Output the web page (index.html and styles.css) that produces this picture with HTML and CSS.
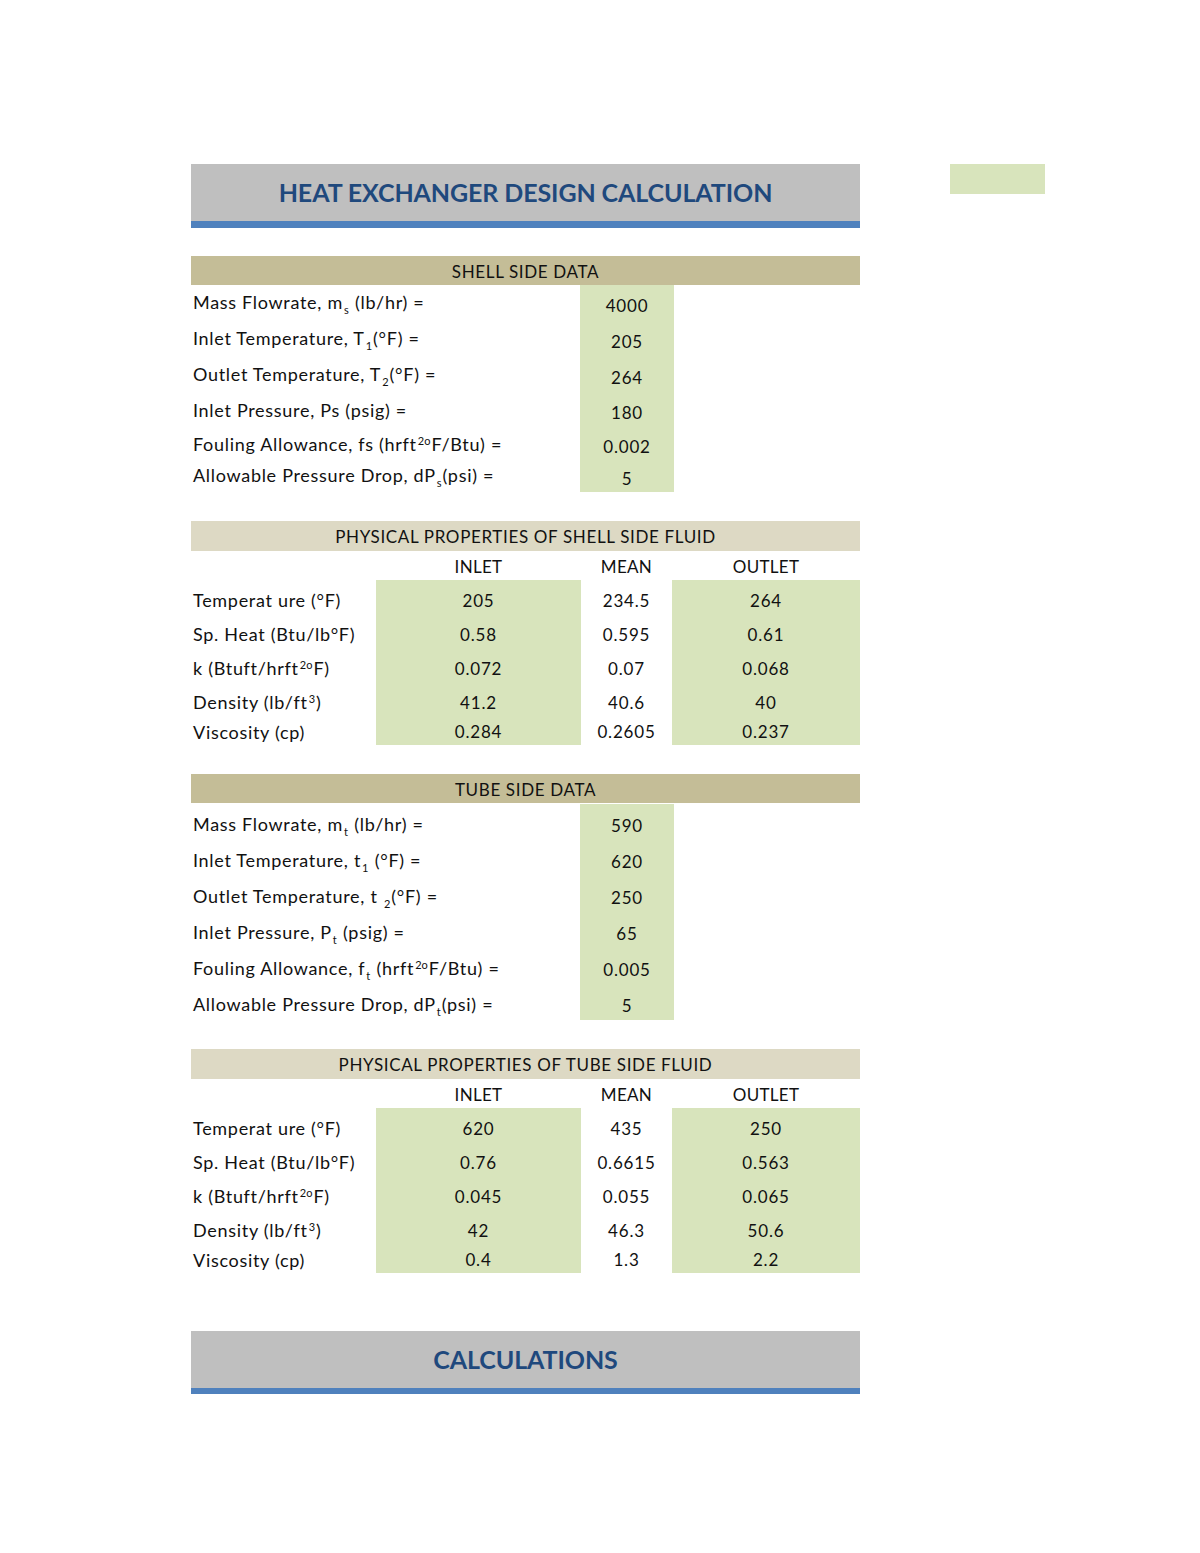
FILE: index.html
```html
<!DOCTYPE html>
<html>
<head>
<meta charset="utf-8">
<link rel="stylesheet" href="styles.css">
</head>
<body>
<div class="page">
  <div class="main">
    <div class="banner"><span>HEAT EXCHANGER DESIGN CALCULATION</span></div>

    <div class="data shell">
      <div class="band dark">SHELL SIDE DATA</div>
      <div class="lbl"><span>Mass Flowrate, m<sub>s</sub> (lb/hr) =</span></div><div class="val">4000</div><div></div>
      <div class="lbl"><span>Inlet Temperature, T<sub>1</sub>(°F) =</span></div><div class="val">205</div><div></div>
      <div class="lbl"><span>Outlet Temperature, T<sub>2</sub>(°F) =</span></div><div class="val">264</div><div></div>
      <div class="lbl"><span>Inlet Pressure, Ps (psig) =</span></div><div class="val">180</div><div></div>
      <div class="lbl"><span>Fouling Allowance, fs (hrft<sup>2o</sup>F/Btu) =</span></div><div class="val">0.002</div><div></div>
      <div class="lbl"><span>Allowable Pressure Drop, dP<sub>s</sub>(psi) =</span></div><div class="val">5</div><div></div>
    </div>

    <div class="props">
      <div class="band light">PHYSICAL PROPERTIES OF SHELL SIDE FLUID</div>
      <div></div><div class="ch">INLET</div><div class="ch">MEAN</div><div class="ch">OUTLET</div>
      <div class="lbl"><span>Temperat ure (°F)</span></div><div class="g c">205</div><div class="c">234.5</div><div class="g c">264</div>
      <div class="lbl"><span>Sp. Heat (Btu/lb°F)</span></div><div class="g c">0.58</div><div class="c">0.595</div><div class="g c">0.61</div>
      <div class="lbl"><span>k (Btuft/hrft<sup>2o</sup>F)</span></div><div class="g c">0.072</div><div class="c">0.07</div><div class="g c">0.068</div>
      <div class="lbl"><span>Density (lb/ft<sup>3</sup>)</span></div><div class="g c">41.2</div><div class="c">40.6</div><div class="g c">40</div>
      <div class="lbl last"><span>Viscosity (cp)</span></div><div class="g c last">0.284</div><div class="c last">0.2605</div><div class="g c last">0.237</div>
    </div>

    <div class="data tube">
      <div class="band dark">TUBE SIDE DATA</div>
      <div class="lbl"><span>Mass Flowrate, m<sub>t</sub> (lb/hr) =</span></div><div class="val">590</div><div></div>
      <div class="lbl"><span>Inlet Temperature, t<sub>1</sub> (°F) =</span></div><div class="val">620</div><div></div>
      <div class="lbl"><span>Outlet Temperature, t <sub>2</sub>(°F) =</span></div><div class="val">250</div><div></div>
      <div class="lbl"><span>Inlet Pressure, P<sub>t</sub> (psig) =</span></div><div class="val">65</div><div></div>
      <div class="lbl"><span>Fouling Allowance, f<sub>t</sub> (hrft<sup>2o</sup>F/Btu) =</span></div><div class="val">0.005</div><div></div>
      <div class="lbl"><span>Allowable Pressure Drop, dP<sub>t</sub>(psi) =</span></div><div class="val">5</div><div></div>
    </div>

    <div class="props">
      <div class="band light">PHYSICAL PROPERTIES OF TUBE SIDE FLUID</div>
      <div></div><div class="ch">INLET</div><div class="ch">MEAN</div><div class="ch">OUTLET</div>
      <div class="lbl"><span>Temperat ure (°F)</span></div><div class="g c">620</div><div class="c">435</div><div class="g c">250</div>
      <div class="lbl"><span>Sp. Heat (Btu/lb°F)</span></div><div class="g c">0.76</div><div class="c">0.6615</div><div class="g c">0.563</div>
      <div class="lbl"><span>k (Btuft/hrft<sup>2o</sup>F)</span></div><div class="g c">0.045</div><div class="c">0.055</div><div class="g c">0.065</div>
      <div class="lbl"><span>Density (lb/ft<sup>3</sup>)</span></div><div class="g c">42</div><div class="c">46.3</div><div class="g c">50.6</div>
      <div class="lbl last"><span>Viscosity (cp)</span></div><div class="g c last">0.4</div><div class="c last">1.3</div><div class="g c last">2.2</div>
    </div>

    <div class="banner calc"><span>CALCULATIONS</span></div>
  </div>
  <div class="swatch"></div>
</div>
</body>
</html>
```

FILE: styles.css
```css
html, body {
  margin: 0;
  padding: 0;
  background: #ffffff;
}
body {
  font-family: Lato, "Open Sans", "Liberation Sans", sans-serif;
  color: #111;
  font-size: 17px;
}
.page {
  display: flex;
  align-items: flex-start;
  padding: 164px 0 0 191px;
  gap: 90px;
}
.main {
  width: 669px;
  display: flex;
  flex-direction: column;
}
.swatch {
  width: 95px;
  height: 30px;
  background: #d8e4bc;
}
.banner {
  height: 57px;
  background: #bfbfbf;
  border-bottom: 7px solid #4f81bd;
  display: flex;
  align-items: center;
  justify-content: center;
  font-weight: 700;
  font-size: 25px;
  color: #1f497d;
  letter-spacing: -0.1px;
}
.banner span {
  position: relative;
  top: -1px;
}
.calc {
  margin-top: 58px;
  height: 57px;
  border-bottom-width: 6px;
}
.band {
  grid-column: 1 / -1;
  height: 29px;
  display: flex;
  align-items: center;
  justify-content: center;
  font-size: 17px;
  letter-spacing: 0.65px;
  padding-top: 1px;
  box-sizing: border-box;
}
.dark { background: #c4bd97; height: 29px; }
.light { background: #ddd9c4; height: 30px; }
.data {
  display: grid;
  grid-template-columns: 389px 94px 1fr;
  margin-top: 28px;
}
.shell { grid-template-rows: 29px 36px 36px 36px 34px 34px 31px; }
.tube { margin-top: 29px; grid-template-rows: 30px 36px 36px 36px 36px 36px 36px; }
.tube .lbl { padding-top: 6px; }
.tube .val { padding-top: 6px; }
.lbl {
  padding-left: 2px;
  display: flex;
  align-items: center;
  white-space: nowrap;
  box-sizing: border-box;
  font-size: 18px;
  letter-spacing: 0.7px;
}
.val {
  background: #d8e4bc;
  display: flex;
  align-items: center;
  justify-content: center;
  padding-top: 4px;
  box-sizing: border-box;
  letter-spacing: 0.8px;
}
.props {
  display: grid;
  grid-template-columns: 185px 205px 91px 1fr;
  grid-template-rows: 30px 29px 34px 34px 34px 34px 29px;
  margin-top: 29px;
}
.props .lbl { padding-top: 6px; }
.props .last { padding-top: 2px; }
.ch {
  display: flex;
  align-items: center;
  justify-content: center;
  padding-top: 1px;
  letter-spacing: 0.3px;
}
.c {
  display: flex;
  align-items: center;
  justify-content: center;
  padding-top: 6px;
  box-sizing: border-box;
  letter-spacing: 0.8px;
}
.g { background: #d8e4bc; }
sub {
  font-size: 11px;
  letter-spacing: 0;
  vertical-align: -5px;
  margin: 0 1px;
}
sup {
  font-size: 11px;
  letter-spacing: 0;
  vertical-align: 6px;
  margin: 0 1px;
}
```
